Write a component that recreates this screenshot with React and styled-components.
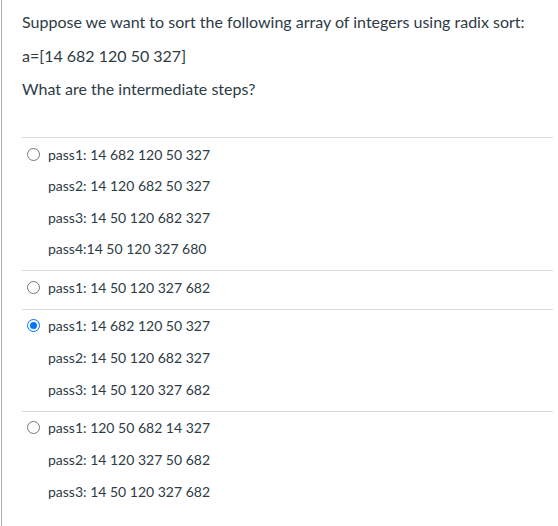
import React from 'react'
import styled, { createGlobalStyle } from 'styled-components'

const Global = createGlobalStyle`
  body {
    margin: 0;
    background: #fff;
    font-family: Lato, "Noto Sans", "Liberation Sans", sans-serif;
    color: #2d3b45;
  }
`

// QUESTION COMPONENTS
const Wrap = styled.div`
  margin-left: 1px;
  border-left: 1px solid #a5afb5;
  padding: 12px 5px 20px 20px;
  min-height: 494px;
`

const Text = styled.p`
  margin: 0 0 13.5px;
  font-size: 16px;
  line-height: 20px;
`

const Question = styled.div`
  margin-bottom: 38px;
`

const Answers = styled.div`
  border-top: 1px solid #d7dbde;
`

const Answer = styled.div`
  border-bottom: ${p => (p.last ? 'none' : '1px solid #d7dbde')};
  padding: 6px 0 11.5px;
`

const Line = styled.div`
  display: flex;
  align-items: center;
  height: 20px;
  margin-bottom: 11.67px;
  font-size: 14px;
  padding-left: ${p => (p.first ? '0' : '26px')};
  &:last-child {
    margin-bottom: 0;
  }
`

const Radio = styled.span`
  box-sizing: border-box;
  width: 13px;
  height: 13px;
  margin: 0 8px 0 5px;
  border-radius: 50%;
  border: 1px solid ${p => (p.checked ? '#0075ff' : '#767676')};
  display: flex;
  align-items: center;
  justify-content: center;
  &::after {
    content: '';
    width: 7px;
    height: 7px;
    border-radius: 50%;
    background: ${p => (p.checked ? '#0075ff' : 'transparent')};
  }
`

const options = [
  ['pass1: 14 682 120 50 327', 'pass2: 14 120 682 50 327', 'pass3: 14 50 120 682 327', 'pass4:14 50 120 327 680'],
  ['pass1: 14 50 120 327 682'],
  ['pass1: 14 682 120 50 327', 'pass2: 14 50 120 682 327', 'pass3: 14 50 120 327 682'],
  ['pass1: 120 50 682 14 327', 'pass2: 14 120 327 50 682', 'pass3: 14 50 120 327 682'],
]

export default function App() {
  return (
    <>
      <Global />
      <Wrap>
        <Question>
          <Text>Suppose we want to sort the following array of integers using radix sort:</Text>
          <Text>a=[14 682 120 50 327]</Text>
          <Text>What are the intermediate steps?</Text>
        </Question>
        <Answers>
          {options.map((lines, i) => (
            <Answer key={i} last={i === options.length - 1}>
              {lines.map((l, j) => (
                <Line key={j} first={j === 0}>
                  {j === 0 && <Radio checked={i === 2} />}
                  {l}
                </Line>
              ))}
            </Answer>
          ))}
        </Answers>
      </Wrap>
    </>
  )
}
